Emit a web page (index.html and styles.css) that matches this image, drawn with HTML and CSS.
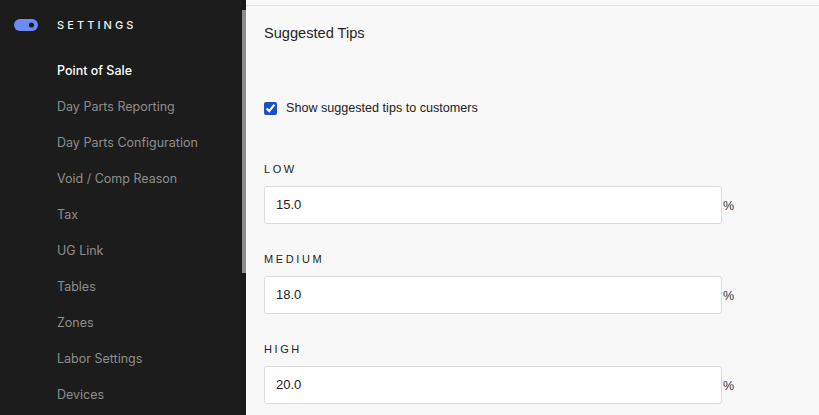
FILE: index.html
```html
<!DOCTYPE html>
<html>
<head>
<meta charset="utf-8">
<link rel="stylesheet" href="styles.css">
</head>
<body>
<div class="app">
  <aside class="sidebar">
    <nav class="nav">
      <div class="nav-head">
        <svg class="toggle" width="24" height="12" viewBox="0 0 24 12"><rect x="0" y="0" width="24" height="12" rx="6" fill="#6b8cf6"/><circle cx="17.5" cy="6" r="2.6" fill="#1c1c1c"/></svg>
        <span class="nav-title">SETTINGS</span>
      </div>
      <ul class="nav-list">
        <li class="nav-item active">Point of Sale</li>
        <li class="nav-item">Day Parts Reporting</li>
        <li class="nav-item">Day Parts Configuration</li>
        <li class="nav-item">Void / Comp Reason</li>
        <li class="nav-item">Tax</li>
        <li class="nav-item">UG Link</li>
        <li class="nav-item">Tables</li>
        <li class="nav-item">Zones</li>
        <li class="nav-item">Labor Settings</li>
        <li class="nav-item">Devices</li>
      </ul>
    </nav>
    <div class="scroll-track"><div class="scroll-thumb"></div></div>
  </aside>
  <main class="main">
    <div class="topbar"></div>
    <div class="content">
      <h2 class="title">Suggested Tips</h2>
      <label class="check-row"><input type="checkbox" checked class="check"><span>Show suggested tips to customers</span></label>
      <div class="field">
        <div class="field-label">LOW</div>
        <div class="field-row"><div class="input">15.0</div><span class="unit">%</span></div>
      </div>
      <div class="field">
        <div class="field-label">MEDIUM</div>
        <div class="field-row"><div class="input">18.0</div><span class="unit">%</span></div>
      </div>
      <div class="field">
        <div class="field-label">HIGH</div>
        <div class="field-row"><div class="input">20.0</div><span class="unit">%</span></div>
      </div>
    </div>
  </main>
</div>
</body>
</html>
```

FILE: styles.css
```css
* { box-sizing: border-box; }
html, body { margin: 0; padding: 0; height: 100%; overflow: hidden; }
body { background: #f8f8f8; }
.app { display: flex; width: 819px; height: 415px; }
.sidebar { display: flex; width: 246px; flex: 0 0 246px; background: #1c1c1c; height: 100%; }
.nav { width: 242px; font-family: Inter, "Liberation Sans", sans-serif; }
.nav-head { display: flex; align-items: center; height: 50px; padding-left: 14px; gap: 19px; }
.toggle { display: block; }
.nav-title { color: #f2f2f2; font-size: 11px; font-weight: 500; letter-spacing: 3.1px; }
.nav-list { list-style: none; margin: 3px 0 0; padding: 0; }
.nav-item { height: 36px; line-height: 36px; padding-left: 57px; font-size: 12.5px; color: #8e8e8e; white-space: nowrap; }
.nav-item.active { color: #ffffff; font-weight: 500; }
.scroll-track { width: 4px; background: #1a1a1a; }
.scroll-thumb { margin-top: 10px; height: 263px; background: #8b8b8b; }
.main { flex: 1; background: #f8f8f8; font-family: "Liberation Sans", Arial, sans-serif; color: #222; }
.topbar { height: 6px; border-bottom: 1px solid #e4e4e4; }
.content { padding-left: 18px; }
.title { margin: 17px 0 0; font-size: 14.6px; font-weight: 400; line-height: 20px; color: #1f1f1f; }
.check-row { display: flex; align-items: center; height: 20px; margin-top: 55px; font-size: 12.6px; color: #222; }
.check { margin: 0 9px 0 0; width: 13px; height: 13px; accent-color: #1d4fc4; }
.field { margin-top: 44px; }
.field + .field { margin-top: 28px; }
.field-label { font-size: 11px; line-height: 14px; letter-spacing: 2.6px; color: #222; margin-bottom: 10px; }
.field-row { display: flex; align-items: center; }
.input { width: 458px; height: 38px; background: #fff; border: 1px solid #dcdcdc; border-radius: 3px; padding-left: 11px; font-size: 13px; line-height: 36px; color: #222; }
.unit { margin-left: 1px; font-size: 12.5px; color: #333; padding-top: 2px; }
```
